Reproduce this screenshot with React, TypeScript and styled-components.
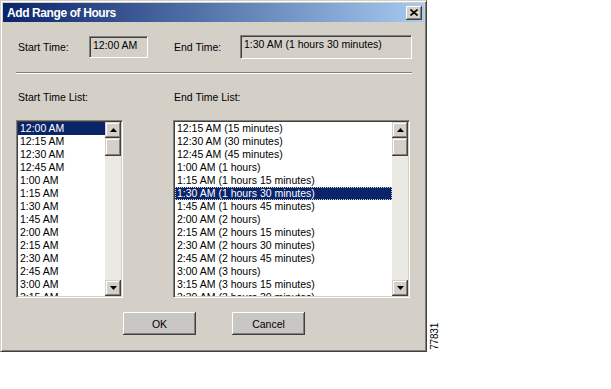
import styled, { createGlobalStyle } from "styled-components";

const GlobalStyle = createGlobalStyle`
    body {
        margin: 0;
        background: #ffffff;
        font-family: "Liberation Sans", Arial, sans-serif;
    }
`;

const FACE = "#d4d0c8";

const Page = styled.div`
    display: flex;
    align-items: flex-end;
`;

const Dialog = styled.div`
    box-sizing: border-box;
    width: 427px;
    height: 352px;
    background: ${FACE};
    border: 1px solid;
    border-color: ${FACE} #404040 #404040 ${FACE};
    box-shadow: inset 1px 1px #ffffff, inset -1px -1px #808080;
    padding: 2px;
    display: flex;
    flex-direction: column;
`;

const TitleBar = styled.div`
    height: 19px;
    display: flex;
    align-items: center;
    justify-content: space-between;
    padding: 0 2px 0 4px;
    background: linear-gradient(to right, #0a246a, #a6caf0);
`;

const Title = styled.span`
    color: #ffffff;
    font-weight: bold;
    font-size: 12px;
    letter-spacing: -0.4px;
`;

const CloseButton = styled.div`
    box-sizing: border-box;
    width: 16px;
    height: 14px;
    background: ${FACE};
    box-shadow: inset -1px -1px #404040, inset 1px 1px #ffffff,
        inset -2px -2px #808080;
    display: flex;
    align-items: center;
    justify-content: center;
`;

const Content = styled.div`
    display: flex;
    flex-direction: column;
    padding-left: 13px;
    font-size: 10.5px;
    color: #000000;
`;

const TimeRow = styled.div`
    display: flex;
    align-items: center;
    height: 24px;
    margin-top: 13px;
`;

const Label = styled.span<{ w?: number; indent?: number }>`
    box-sizing: border-box;
    display: inline-block;
    width: ${(p) => (p.w ? `${p.w}px` : "auto")};
    margin-left: ${(p) => p.indent ?? 0}px;
    line-height: 13px;
    white-space: nowrap;
`;

const ReadOnlyBox = styled.div<{ w: number; h: number }>`
    box-sizing: border-box;
    width: ${(p) => p.w}px;
    height: ${(p) => p.h}px;
    border: 1px solid;
    border-color: #808080 #ffffff #ffffff #808080;
    box-shadow: inset 1px 1px #404040;
    padding: 2px 0 0 3px;
    line-height: 13px;
    white-space: nowrap;
`;

const Separator = styled.div`
    width: 396px;
    height: 0;
    margin-top: 13px;
    border-top: 1px solid #808080;
    border-bottom: 1px solid #ffffff;
`;

const ListRow = styled.div`
    display: flex;
    gap: 50px;
    margin-top: 17px;
`;

const Column = styled.div<{ w: number }>`
    display: flex;
    flex-direction: column;
    width: ${(p) => p.w}px;
    gap: 16px;
`;

const ListBox = styled.div`
    box-sizing: border-box;
    height: 178px;
    display: flex;
    background: #ffffff;
    border: 1px solid;
    border-color: #808080 #ffffff #ffffff #808080;
    box-shadow: inset 1px 1px #404040, inset -1px -1px ${FACE};
    padding: 1px;
`;

const Items = styled.div`
    flex: 1;
    overflow: hidden;
`;

const Item = styled.div<{ selected?: boolean; focused?: boolean }>`
    box-sizing: border-box;
    height: 13px;
    line-height: 13px;
    padding-left: 2px;
    white-space: nowrap;
    background: ${(p) => (p.selected ? "#0a246a" : "transparent")};
    color: ${(p) => (p.selected ? "#ffffff" : "#000000")};
    outline: ${(p) => (p.focused ? `1px dotted ${FACE}` : "none")};
    outline-offset: -1px;
`;

const ScrollBar = styled.div`
    width: 16px;
    display: flex;
    flex-direction: column;
    background: #ebe9e4;
`;

const ScrollPart = styled.div<{ h: number }>`
    box-sizing: border-box;
    height: ${(p) => p.h}px;
    background: ${FACE};
    box-shadow: inset -1px -1px #404040, inset 1px 1px ${FACE},
        inset -2px -2px #808080, inset 2px 2px #ffffff;
    display: flex;
    align-items: center;
    justify-content: center;
`;

const Track = styled.div`
    flex: 1;
`;

const ButtonRow = styled.div`
    display: flex;
    gap: 36px;
    margin-top: 14px;
    padding-left: 107px;
`;

const Button = styled.div`
    box-sizing: border-box;
    width: 73px;
    height: 23px;
    background: #c8c7c3;
    box-shadow: inset -1px -1px #404040, inset 1px 1px #ffffff,
        inset -2px -2px #808080;
    display: flex;
    align-items: center;
    justify-content: center;
    font-size: 10.5px;
`;

const FigureNumber = styled.span`
    writing-mode: vertical-rl;
    transform: rotate(180deg);
    font-size: 10px;
    line-height: 9px;
    margin: 0 0 2px 3px;
    letter-spacing: -0.2px;
`;

const Arrow = ({ down }: { down?: boolean }) => (
    <svg width="7" height="4" viewBox="0 0 7 4">
        <polygon
            points={down ? "0,0 7,0 3.5,4" : "3.5,0 7,4 0,4"}
            fill="#000000"
        />
    </svg>
);

const startTimes = [
    "12:00 AM", "12:15 AM", "12:30 AM", "12:45 AM", "1:00 AM", "1:15 AM",
    "1:30 AM", "1:45 AM", "2:00 AM", "2:15 AM", "2:30 AM", "2:45 AM",
    "3:00 AM", "3:15 AM",
];

const endTimes = [
    "12:15 AM (15 minutes)",
    "12:30 AM (30 minutes)",
    "12:45 AM (45 minutes)",
    "1:00 AM (1 hours)",
    "1:15 AM (1 hours 15 minutes)",
    "1:30 AM (1 hours 30 minutes)",
    "1:45 AM (1 hours 45 minutes)",
    "2:00 AM (2 hours)",
    "2:15 AM (2 hours 15 minutes)",
    "2:30 AM (2 hours 30 minutes)",
    "2:45 AM (2 hours 45 minutes)",
    "3:00 AM (3 hours)",
    "3:15 AM (3 hours 15 minutes)",
    "3:30 AM (3 hours 30 minutes)",
];

function ScrollList({ items, selected, focused }: { items: string[]; selected: number; focused?: boolean }) {
    return (
        <ListBox>
            <Items>
                {items.map((t, i) => (
                    <Item key={t} selected={i === selected} focused={focused && i === selected}>
                        {t}
                    </Item>
                ))}
            </Items>
            <ScrollBar>
                <ScrollPart h={16}><Arrow /></ScrollPart>
                <ScrollPart h={18} />
                <Track />
                <ScrollPart h={16}><Arrow down /></ScrollPart>
            </ScrollBar>
        </ListBox>
    );
}

function App() {
    return (
        <>
            <GlobalStyle />
            <Page>
                <Dialog>
                    <TitleBar>
                        <Title>Add Range of Hours</Title>
                        <CloseButton>
                            <svg width="8" height="7" viewBox="0 0 8 7">
                                <path d="M0.5 0.5 L7.5 6.5 M7.5 0.5 L0.5 6.5" stroke="#000" strokeWidth="1.6" />
                            </svg>
                        </CloseButton>
                    </TitleBar>
                    <Content>
                        <TimeRow>
                            <Label w={71} indent={2}>Start Time:</Label>
                            <ReadOnlyBox w={59} h={22}>12:00 AM</ReadOnlyBox>
                            <Label w={66} indent={26}>End Time:</Label>
                            <ReadOnlyBox w={172} h={24}>1:30 AM (1 hours 30 minutes)</ReadOnlyBox>
                        </TimeRow>
                        <Separator />
                        <ListRow>
                            <Column w={107}>
                                <Label indent={2}>Start Time List:</Label>
                                <ScrollList items={startTimes} selected={0} />
                            </Column>
                            <Column w={237}>
                                <Label indent={1}>End Time List:</Label>
                                <ScrollList items={endTimes} selected={5} focused />
                            </Column>
                        </ListRow>
                        <ButtonRow>
                            <Button>OK</Button>
                            <Button>Cancel</Button>
                        </ButtonRow>
                    </Content>
                </Dialog>
                <FigureNumber>77831</FigureNumber>
            </Page>
        </>
    );
}

export default App;
